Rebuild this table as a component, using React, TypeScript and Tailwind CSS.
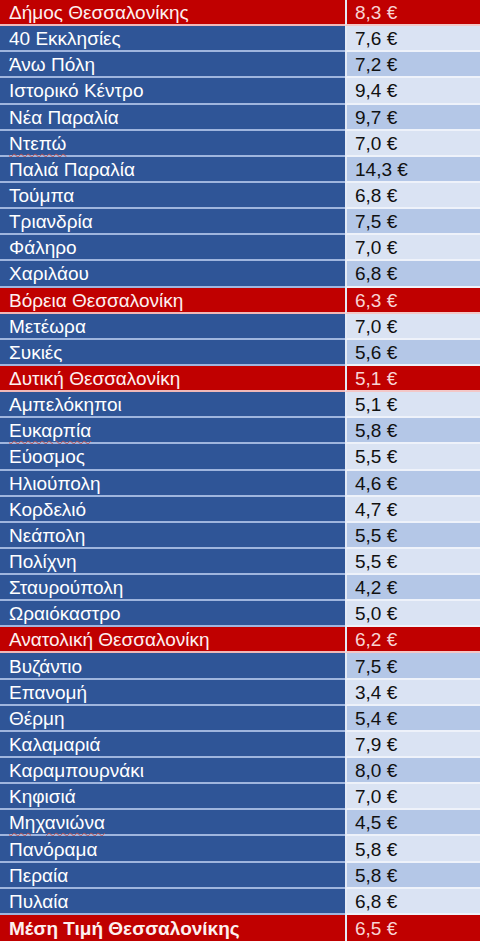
type Row = {
  name: string;
  price: string;
  kind: 'head' | 'light' | 'dark' | 'total';
  typo?: boolean;
};

const rows: Row[] = [
  { name: 'Δήμος Θεσσαλονίκης', price: '8,3 €', kind: 'head' },
  { name: '40 Εκκλησίες', price: '7,6 €', kind: 'light' },
  { name: 'Άνω Πόλη', price: '7,2 €', kind: 'dark' },
  { name: 'Ιστορικό Κέντρο', price: '9,4 €', kind: 'light' },
  { name: 'Νέα Παραλία', price: '9,7 €', kind: 'dark' },
  { name: 'Ντεπώ', price: '7,0 €', kind: 'light', typo: true },
  { name: 'Παλιά Παραλία', price: '14,3 €', kind: 'dark' },
  { name: 'Τούμπα', price: '6,8 €', kind: 'light' },
  { name: 'Τριανδρία', price: '7,5 €', kind: 'dark' },
  { name: 'Φάληρο', price: '7,0 €', kind: 'light' },
  { name: 'Χαριλάου', price: '6,8 €', kind: 'dark' },
  { name: 'Βόρεια Θεσσαλονίκη', price: '6,3 €', kind: 'head' },
  { name: 'Μετέωρα', price: '7,0 €', kind: 'light' },
  { name: 'Συκιές', price: '5,6 €', kind: 'dark' },
  { name: 'Δυτική Θεσσαλονίκη', price: '5,1 €', kind: 'head' },
  { name: 'Αμπελόκηποι', price: '5,1 €', kind: 'light' },
  { name: 'Ευκαρπία', price: '5,8 €', kind: 'dark', typo: true },
  { name: 'Εύοσμος', price: '5,5 €', kind: 'light' },
  { name: 'Ηλιούπολη', price: '4,6 €', kind: 'dark' },
  { name: 'Κορδελιό', price: '4,7 €', kind: 'light' },
  { name: 'Νεάπολη', price: '5,5 €', kind: 'dark' },
  { name: 'Πολίχνη', price: '5,5 €', kind: 'light' },
  { name: 'Σταυρούπολη', price: '4,2 €', kind: 'dark' },
  { name: 'Ωραιόκαστρο', price: '5,0 €', kind: 'light' },
  { name: 'Ανατολική Θεσσαλονίκη', price: '6,2 €', kind: 'head' },
  { name: 'Βυζάντιο', price: '7,5 €', kind: 'dark' },
  { name: 'Επανομή', price: '3,4 €', kind: 'light' },
  { name: 'Θέρμη', price: '5,4 €', kind: 'dark' },
  { name: 'Καλαμαριά', price: '7,9 €', kind: 'light' },
  { name: 'Καραμπουρνάκι', price: '8,0 €', kind: 'dark' },
  { name: 'Κηφισιά', price: '7,0 €', kind: 'light' },
  { name: 'Μηχανιώνα', price: '4,5 €', kind: 'dark', typo: true },
  { name: 'Πανόραμα', price: '5,8 €', kind: 'light' },
  { name: 'Περαία', price: '5,8 €', kind: 'dark' },
  { name: 'Πυλαία', price: '6,8 €', kind: 'light' },
  { name: 'Μέση Τιμή Θεσσαλονίκης', price: '6,5 €', kind: 'total' },
];

const PriceRow = ({ row, last }: { row: Row; last: boolean }) => {
  const red = row.kind === 'head' || row.kind === 'total';
  const leftBg = red ? 'bg-[#c00000] text-[#fdf0f0]' : 'bg-[#2f5597] text-white';
  const rightBg = red
    ? 'bg-[#c00000] text-[#f8d4d4]'
    : row.kind === 'light'
      ? 'bg-[#dae3f3] text-[#111111]'
      : 'bg-[#b4c7e7] text-[#111111]';
  const lineLeft = red ? 'border-[#f0b8b8]' : 'border-[#9fb5de]';
  const lineRight = red ? 'border-[#f3c7c7]' : 'border-[#eef2fa]';

  return (
    <>
      <div
        className={`flex items-center pl-[9px] ${leftBg} ${last ? '' : `border-b-2 ${lineLeft}`}`}
      >
        <span
          className={`leading-none pt-[1px] ${row.kind === 'total' ? 'font-bold' : ''} ${
            row.typo ? 'underline decoration-wavy decoration-[#c0504d] decoration-1 underline-offset-[3px]' : ''
          }`}
        >
          {row.name}
        </span>
      </div>
      <div
        className={`flex items-center pl-[8px] border-l-2 border-l-[#e4eaf6] ${rightBg} ${
          last ? '' : `border-b-2 ${lineRight}`
        }`}
      >
        <span className="leading-none pt-[1px]">{row.price}</span>
      </div>
    </>
  );
};

export default function App() {
  return (
    <div
      className="w-[480px] h-[941px] overflow-hidden bg-white grid grid-cols-[345px_1fr] grid-rows-[repeat(36,minmax(0,1fr))] text-[19px]"
      style={{ fontFamily: '"Liberation Sans", Arial, "Noto Sans", sans-serif' }}
    >
      {rows.map((r, i) => (
        <PriceRow key={r.name} row={r} last={i === rows.length - 1} />
      ))}
    </div>
  );
}
